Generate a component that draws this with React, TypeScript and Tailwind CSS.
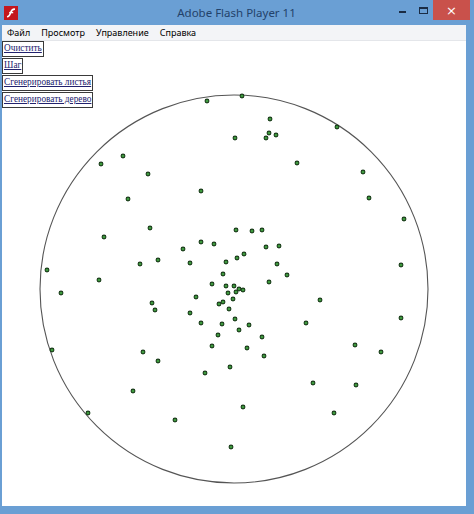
import React from 'react';

// points of the generated leaves, in window pixels
const LEAVES: [number, number][] = [
  [207, 101], [242, 96], [270, 119], [269, 133], [276, 135], [266, 138], [337, 127], [235, 138],
  [123, 156], [101, 164], [297, 163], [148, 174], [363, 172], [201, 191], [128, 199], [369, 198],
  [404, 219], [150, 228], [104, 237], [236, 230], [252, 231], [262, 230], [201, 242], [214, 244],
  [183, 249], [244, 254], [266, 247], [279, 246], [140, 264], [158, 260], [190, 263], [226, 262],
  [237, 258], [277, 264], [287, 275], [401, 265], [47, 270], [99, 280], [61, 293], [152, 303],
  [155, 310], [190, 313], [320, 300], [249, 325], [306, 323], [401, 318], [201, 323], [218, 335],
  [262, 337], [52, 350], [143, 352], [212, 346], [247, 348], [355, 345], [381, 352], [158, 361],
  [264, 356], [205, 373], [230, 367], [313, 383], [133, 391], [356, 385], [243, 407], [334, 413],
  [88, 413], [175, 420], [231, 447], [239, 330],
  [223, 274], [212, 284], [226, 286], [234, 286], [239, 289], [243, 290], [236, 292], [228, 293],
  [196, 297], [233, 299], [223, 302], [219, 304], [269, 282], [229, 309], [222, 324], [235, 319],
];

const MENU = ['Файл', 'Просмотр', 'Управление', 'Справка'];
const BUTTONS = ['Очистить', 'Шаг', 'Сгенерировать листья', 'Сгенерировать дерево'];

const FlashIcon = () => (
  <svg width="14" height="14" viewBox="0 0 14 14">
    <rect width="14" height="14" fill="#c4161c" />
    <path d="M11 3.2c-2.6-.3-3.6 1.2-4.3 3.3C6 8.8 5.2 10.6 3 10.8" stroke="#fff" strokeWidth="1.6" fill="none" />
    <path d="M5.2 6.6h4" stroke="#fff" strokeWidth="1.4" />
  </svg>
);

export default function App() {
  return (
    <div className="w-[474px] h-[514px] bg-[#6a9fd4] flex flex-col overflow-hidden">
      {/* title bar */}
      <div className="h-[25px] flex items-center shrink-0">
        <div className="pl-[4px] pt-[1px] flex items-center">
          <FlashIcon />
        </div>
        <div className="flex-1 text-center text-[11.5px] text-[#23426a] font-['Noto_Sans',sans-serif] pl-[64px]">
          Adobe Flash Player 11
        </div>
        <div className="flex items-start self-start h-[21px]">
          <div className="w-[22px] h-[20px] flex items-center justify-center">
            <div className="w-[7px] h-[2px] bg-[#1b2c44] mt-[4px]" />
          </div>
          <div className="w-[20px] h-[20px] flex items-center justify-center">
            <div className="w-[9px] h-[7px] border border-[#1b2c44] border-t-2" />
          </div>
          <div className="w-[37px] h-[20px] bg-[#c9514b] flex items-center justify-center mr-[4px] text-white text-[13px] font-['DejaVu_Sans',sans-serif] leading-none">
            ×
          </div>
        </div>
      </div>

      <div className="flex-1 flex flex-col ml-[2px] mr-[8px] mb-[8px]">
        {/* menu bar */}
        <div className="h-[16px] bg-[#f3f4f7] border-b border-[#e4e6ea] flex items-center gap-[11px] pl-[5px] text-[9px] text-black font-['Noto_Sans',sans-serif] shrink-0">
          {MENU.map(m => (
            <span key={m} className="leading-none">{m}</span>
          ))}
        </div>

        {/* stage */}
        <div className="flex-1 bg-white relative">
          <svg className="absolute inset-0" width="464" height="465" viewBox="2 41 464 465">
            <circle cx="234" cy="289" r="194" fill="none" stroke="#555" strokeWidth="1.1" />
            {LEAVES.map(([x, y], i) => (
              <circle key={i} cx={x} cy={y} r="1.9" fill="#3d9b3d" stroke="#183a18" strokeWidth="1.1" />
            ))}
          </svg>
          <div className="relative flex flex-col items-start gap-[1px]">
            {BUTTONS.map(b => (
              <div
                key={b}
                className="border border-[#3a3a3a] bg-white px-[1px] h-[16px] flex items-center text-[9.3px] text-[#22226e] underline font-['Liberation_Serif',serif]"
              >
                {b}
              </div>
            ))}
          </div>
        </div>
      </div>
    </div>
  );
}
